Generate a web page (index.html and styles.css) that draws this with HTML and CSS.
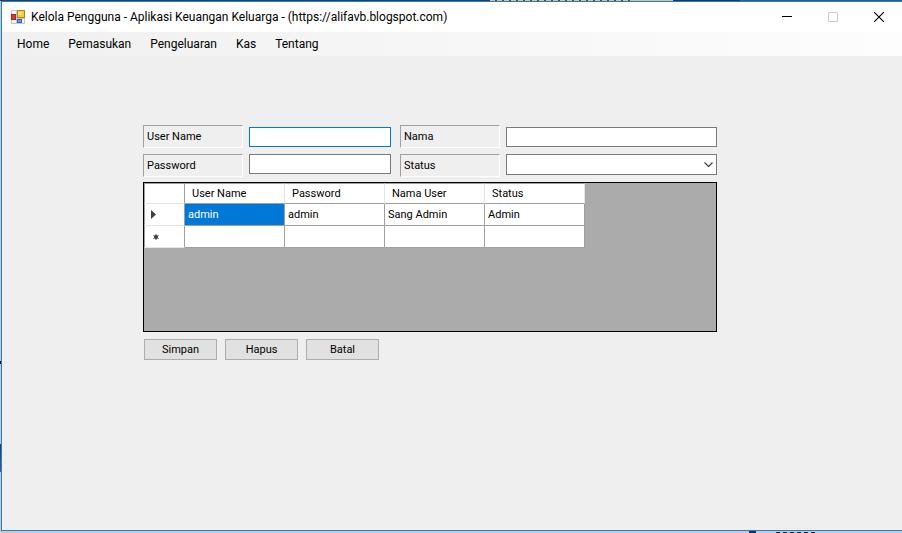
FILE: index.html
```html
<!DOCTYPE html>
<html lang="id">
<head>
  <meta charset="UTF-8">
  <meta name="viewport" content="width=device-width, initial-scale=1.0">
  <title>Kelola Pengguna</title>
  <link rel="stylesheet" href="styles.css">
</head>
<body>

<div class="window">
  <header class="titlebar">
    <svg class="app-icon" width="14" height="14" viewBox="0 0 14 14" shape-rendering="crispEdges">
      <rect x="0" y="0" width="14" height="14" fill="#c4c6cc"/>
      <rect x="1" y="1" width="4" height="3" fill="#f4f5f8"/>
      <rect x="1" y="10" width="4" height="3" fill="#f4f5f8"/>
      <rect x="11" y="9" width="2" height="4" fill="#f4f5f8"/>
      <rect x="0" y="4" width="5" height="6" fill="#a02a26"/>
      <rect x="1" y="5" width="3" height="4" fill="#d63a2c"/>
      <rect x="6" y="0" width="8" height="8" fill="#b8860b"/>
      <rect x="7" y="1" width="6" height="6" fill="#fbc92f"/>
      <rect x="7" y="2" width="4" height="3" fill="#ffe582"/>
      <rect x="6" y="9" width="5" height="4" fill="#2c5fc9"/>
      <rect x="7" y="10" width="3" height="2" fill="#6e9df0"/>
    </svg>
    <h1 class="title">Kelola Pengguna - Aplikasi Keuangan Keluarga - (https://alifavb.blogspot.com)</h1>
    <div class="window-controls">
      <button class="control" type="button" aria-label="Minimize">
        <svg width="10" height="10" viewBox="0 0 10 10"><path d="M0 4.5h10" stroke="#000"/></svg>
      </button>
      <button class="control" type="button" aria-label="Maximize" disabled>
        <svg width="10" height="10" viewBox="0 0 10 10"><path d="M.5.5h9v9h-9z" fill="none" stroke="#ccc"/></svg>
      </button>
      <button class="control" type="button" aria-label="Close">
        <svg width="10" height="10" viewBox="0 0 10 10"><path d="M0 0l10 10M10 0L0 10" stroke="#000" stroke-width="1.1"/></svg>
      </button>
    </div>
  </header>

  <nav class="menu">
    <a href="#">Home</a>
    <a href="#">Pemasukan</a>
    <a href="#">Pengeluaran</a>
    <a href="#">Kas</a>
    <a href="#">Tentang</a>
  </nav>

  <main class="content">
    <form>
      <div class="form-row">
        <label for="username">User Name</label>
        <input class="active" type="text" id="username">
        <label class="second" for="nama">Nama</label>
        <input type="text" id="nama">
      </div>
      <div class="form-row top">
        <label for="password">Password</label>
        <input type="password" id="password">
        <label class="second" for="status">Status</label>
        <div class="select-box">
          <select id="status">
            <option value=""></option>
            <option>Admin</option>
            <option>User</option>
          </select>
          <svg class="chevron" width="9" height="5" viewBox="0 0 9 5"><path d="M.5.5l4 4 4-4" fill="none" stroke="#444" stroke-width="1.2"/></svg>
        </div>
      </div>

      <div class="data-grid">
        <table>
          <thead>
            <tr>
              <td class="row-head"></td>
              <th>User Name</th>
              <th>Password</th>
              <th>Nama User</th>
              <th>Status</th>
            </tr>
          </thead>
          <tbody>
            <tr>
              <td class="row-head"><svg width="5" height="9" viewBox="0 0 5 9"><path d="M0 0l5 4.5L0 9z" fill="#404040"/></svg></td>
              <td class="selected">admin</td>
              <td>admin</td>
              <td>Sang Admin</td>
              <td>Admin</td>
            </tr>
            <tr>
              <td class="row-head new"><svg width="6" height="6" viewBox="0 0 6 6"><path d="M3 0v6M.4 1.5l5.2 3M5.6 1.5l-5.2 3" stroke="#505050"/><circle cx="3" cy="3" r="2" fill="#404040"/></svg></td>
              <td></td>
              <td></td>
              <td></td>
              <td></td>
            </tr>
          </tbody>
        </table>
      </div>

      <div class="buttons">
        <button type="button">Simpan</button>
        <button type="button">Hapus</button>
        <button type="button">Batal</button>
      </div>
    </form>
  </main>
</div>

</body>
</html>
```
FILE: styles.css
```css
* {
  box-sizing: border-box;
}
body {
  margin: 0;
  padding: 1px 0 2px 1px;
  min-height: 100vh;
  display: flex;
  font-family: Roboto, Tahoma, sans-serif;
  font-size: 11px;
  color: #000;
  /* desktop peeking out behind the window */
  background:
    repeating-linear-gradient(90deg, transparent 0 5px, rgba(0, 0, 0, 0.6) 5px 7px) 490px 0 / 140px 1px no-repeat,
    linear-gradient(90deg, #2d3f5c 490px, #d8c878 490px, #d8c878 673px, #24344f 673px, #24344f 740px, #46567a 740px) 0 0 / 100% 1px no-repeat,
    linear-gradient(#2b3a5a, #4a5a80) 0 444px / 1px 28px no-repeat,
    linear-gradient(#000, #000) 0 361px / 1px 3px no-repeat,
    linear-gradient(#1e2c50, #1e2c50) 749px 100% / 7px 2px no-repeat,
    repeating-linear-gradient(90deg, #222 0 4px, transparent 4px 7px) 776px 100% / 42px 1px no-repeat,
    #c8c8c8;
}
.window {
  flex: 1;
  display: flex;
  flex-direction: column;
  border: 1px solid #1f80cf;
  border-right: 0;
  background: #efefef;
}
.titlebar {
  display: flex;
  align-items: center;
  height: 30px;
  padding-left: 9px;
  background: #fff;
}
.title {
  margin: 0 0 0 6px;
  flex: 1;
  font-size: 12px;
  font-weight: normal;
  line-height: 16px;
  white-space: nowrap;
}
.window-controls {
  display: flex;
}
.control {
  width: 46px;
  height: 28px;
  padding: 0;
  border: 0;
  background: none;
  display: flex;
  align-items: center;
  justify-content: center;
}
.menu {
  display: flex;
  align-items: center;
  gap: 19px;
  height: 24px;
  padding-left: 15px;
  background: linear-gradient(90deg, #f0f0f0, #fdfdfd);
}
.menu a {
  font-size: 12px;
  line-height: 16px;
  color: #000;
  text-decoration: none;
}
.content {
  padding: 69px 185px 20px 141px;
}
.form-row {
  display: grid;
  grid-template-columns: 100px 142px 103px 1fr;
  column-gap: 6px;
  align-items: center;
  margin-bottom: 6px;
}
.form-row.top {
  align-items: start;
  margin-bottom: 5px;
}
label {
  height: 23px;
  padding-left: 3px;
  line-height: 22px;
  border: 1px solid;
  border-color: #a0a0a0 #fff #fff #a0a0a0;
}
label.second {
  margin-left: 3px;
}
input, select {
  display: block;
  width: 100%;
  height: 20px;
  padding: 2px;
  border: 1px solid #7a7a7a;
  border-radius: 0;
  background: #fff;
  font: inherit;
  outline: none;
}
input.active,
input:focus {
  border-color: #0078d7;
}
.select-box {
  position: relative;
}
select {
  height: 21px;
  appearance: none;
}
.chevron {
  position: absolute;
  top: 8px;
  right: 4px;
  pointer-events: none;
}
.data-grid {
  height: 150px;
  border: 1px solid #000;
  background: #ababab;
}
table {
  table-layout: fixed;
  width: 441px;
  border-spacing: 0;
}
th, td {
  width: 100px;
  height: 22px;
  padding: 0 3px;
  border: 0 solid #a0a0a0;
  border-width: 0 1px 1px 0;
  background: #fff;
  font-weight: normal;
  text-align: left;
}
thead th, thead td {
  height: 21px;
  padding: 0 7px;
  border-top-width: 1px;
  border-right-color: #e5e5e5;
}
.row-head {
  width: 41px;
  padding: 0 6px;
  border-left-width: 1px;
  border-bottom-color: #e5e5e5;
}
thead .row-head {
  border-right-color: #a0a0a0;
}
.row-head.new {
  padding: 0 8px;
}
.row-head svg {
  display: block;
}
.selected {
  background: #0078d7;
  color: #fff;
}
.buttons {
  display: flex;
  gap: 8px;
  margin-top: 7px;
  padding-left: 1px;
}
.buttons button {
  width: 73px;
  height: 21px;
  padding: 0;
  border: 1px solid #adadad;
  background: #e1e1e1;
  color: #000;
  font: inherit;
}
.buttons button:hover {
  border-color: #0078d7;
  background: #e5f1fb;
}
```
